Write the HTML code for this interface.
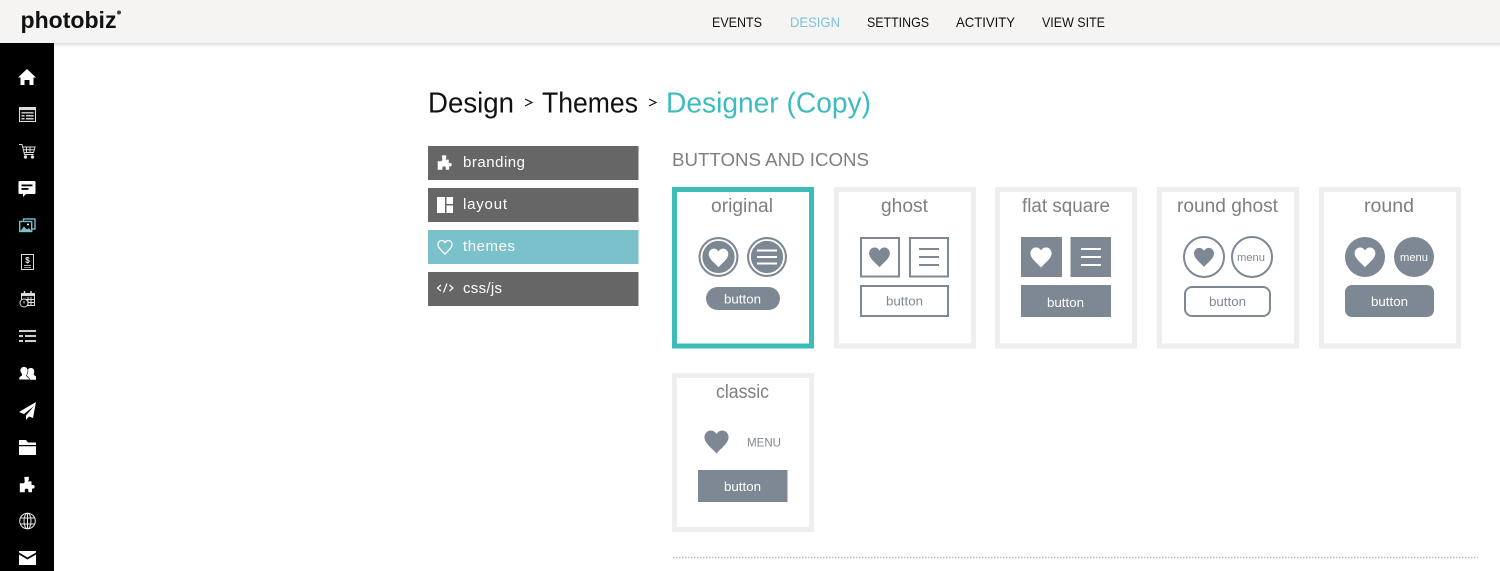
<!DOCTYPE html>
<html><head><meta charset="utf-8"><title>Themes</title>
<style>
html,body{margin:0;padding:0;background:#fff;width:1500px;height:571px;overflow:hidden}
svg{display:block;position:absolute;left:0;top:0}
text{font-family:"Liberation Sans",sans-serif}
.nav{font-size:14px;fill:#111}
.l{font-size:19px;fill:#7f7f7f;text-anchor:start}
.b{font-size:13px}
.m{font-size:15px;fill:#fff}
.t{font-size:29px;fill:#111}
</style></head><body>
<svg width="1500" height="571" viewBox="0 0 1500 571" xmlns="http://www.w3.org/2000/svg">
<defs>
<linearGradient id="sh" x1="0" y1="0" x2="0" y2="1"><stop offset="0" stop-color="#ddd"/><stop offset="1" stop-color="#fff"/></linearGradient>
<path id="h" d="M0 11.500C-3 7.500-11.500 2-11.500-4C-11.500-8-8.500-10.500-5.500-10.500C-3-10.500-1-9 0-7C1-9 3-10.500 5.500-10.500C8.500-10.500 11.500-8 11.500-4C11.500 2 3 7.500 0 11.500Z"/>
<path id="pz" d="M-3-9h5v3.500l-1 1.500h4v4h1.500a2 2 0 1 1 0 4H5.500V8H1.500V6a2 2 0 0 0-4 0v2H-8V-2H-3.500l1-1.500Z"/>
</defs>
<rect width="1500" height="571" fill="#fff"/>
<rect width="1500" height="43" fill="#f5f4f2"/>
<rect y="43" width="1500" height="4" fill="url(#sh)"/>
<rect y="43" width="54" height="528" fill="#000"/>

<text x="20.500" y="28" font-size="23.500" font-weight="bold" fill="#111" textLength="96" lengthAdjust="spacingAndGlyphs">photobiz</text>
<circle cx="119" cy="12.500" r="2" fill="#444"/>

<text class="nav" x="712" y="27" textLength="50" lengthAdjust="spacingAndGlyphs">EVENTS</text>
<text class="nav" x="790" y="27" textLength="50" lengthAdjust="spacingAndGlyphs" style="fill:#7bc4d6">DESIGN</text>
<text class="nav" x="867" y="27" textLength="62" lengthAdjust="spacingAndGlyphs">SETTINGS</text>
<text class="nav" x="956" y="27" textLength="59" lengthAdjust="spacingAndGlyphs">ACTIVITY</text>
<text class="nav" x="1042" y="27" textLength="63" lengthAdjust="spacingAndGlyphs">VIEW SITE</text>

<!-- sidebar icons -->
<path d="M27 69L36 77.500H33.500V85H29.500V80H24.500V85H20.500V77.500H18Z" fill="#fff"/>
<g><rect x="19.500" y="107.500" width="16" height="14" fill="#111" stroke="#ddd"/><rect x="19" y="107" width="17" height="3" fill="#ddd"/><rect x="21.500" y="112" width="12" height="1.500" fill="#bbb"/><rect x="21.500" y="115" width="3" height="1.500" fill="#ccc"/><rect x="26" y="115" width="7.500" height="1.500" fill="#ccc"/><rect x="21.500" y="118" width="3" height="1.500" fill="#ccc"/><rect x="26" y="118" width="7.500" height="1.500" fill="#ccc"/></g>
<g fill="none" stroke="#ddd"><path d="M19 144.500h3l2.500 10h9"/><path d="M23 147h12l-1.500 5.500H24.500M26.500 147v5.500M30 147v5.500M23.500 149.700h11"/><circle cx="25.500" cy="157" r="1.200" fill="#ddd"/><circle cx="32.500" cy="157" r="1.200" fill="#ddd"/></g>
<path d="M19.500 181h15a1 1 0 0 1 1 1v11a1 1 0 0 1-1 1H26l-3 3v-3h-3.500a1 1 0 0 1-1-1v-11a1 1 0 0 1 1-1Z" fill="#fff"/><rect x="21.500" y="184.500" width="11" height="1.800" fill="#000"/><rect x="21.500" y="188" width="7" height="1.800" fill="#000"/>
<g fill="none" stroke="#7bbccb" stroke-width="1.400"><rect x="23.500" y="219" width="11.500" height="10"/><rect x="19.700" y="221.500" width="12" height="10" fill="#000"/></g><path d="M19.500 232l4.500-5.500 3 3 2-1.500 3 4Z" fill="#7bc1cc"/><circle cx="28" cy="224.500" r="1" fill="#fff"/>
<g><rect x="21.500" y="254.500" width="12" height="15" fill="none" stroke="#ddd"/><text x="27.500" y="263" font-size="8" font-weight="bold" fill="#eee" text-anchor="middle">$</text><rect x="24" y="265" width="7" height="1" fill="#aaa"/><rect x="24" y="267" width="7" height="1" fill="#888"/></g>
<g fill="none" stroke="#ddd"><rect x="21.500" y="293.500" width="13" height="12" fill="#111"/><rect x="21.500" y="293.500" width="13" height="2.500" fill="#ddd" stroke="none"/><path d="M24.500 291v3M31 291v3" stroke-width="1.500"/><path d="M28 297v8M31 297v8M25 299.500h10M25 302.500h10"/><circle cx="24" cy="303" r="4" fill="#000"/><path d="M24 301v2.500"/></g>
<g fill="#cfd3d6"><rect x="19" y="330" width="17" height="2"/><rect x="19" y="335" width="4" height="2"/><rect x="25" y="335" width="11" height="2"/><rect x="19" y="340" width="4" height="2"/><rect x="25" y="340" width="11" height="2"/></g>
<path d="M31 368a3 3.500 0 0 1 3 5c-.5 1.200-.5 2 1 2.700l1 .8V379.800H29c0-2-1-3.500-2.500-4.500 1-1 1.500-2.500 1-4.500.5-1.800 1.500-2.800 3.500-2.800Z" fill="#fff"/><path d="M24 366.500a4 4.500 0 0 1 4 4.500c0 2-1 3.500-1.500 4.500 0 1 1 1.300 2 2 .8.600 1 1.300 1 2.300H19v-2c0-.8 1-1.500 2.500-2.300.5-1 .2-1.500-.5-2.500a6 6 0 0 1-1-2.500 4 4.500 0 0 1 4-4Z" fill="#fff" stroke="#000" stroke-width=".6"/>
<path d="M36 402L19 412l5 2 10-8-8 9.500V420l3-3.500 4 1.500Z" fill="#fff"/>
<path d="M19 440h7l2 2.500h8V445H19ZM19 446.300h17V455H19Z" fill="#fff"/>
<use href="#pz" transform="translate(27 485) scale(.9)" fill="#fff"/>
<g fill="none" stroke="#e8e8e8" stroke-width="1"><circle cx="27.500" cy="521" r="7.800"/><ellipse cx="27.500" cy="521" rx="3.500" ry="7.800"/><path d="M27.500 513v16M20 518h15M20 524h15"/></g>
<path d="M19 551h17v1.500l-8.500 5-8.500-5ZM19 554.500l8.500 5 8.500-5V565H19Z" fill="#fff"/>

<!-- title -->
<text class="t" x="428" y="112.500" textLength="86" lengthAdjust="spacingAndGlyphs">Design</text>
<path d="M525 99l7 3.500-7 3.500" fill="none" stroke="#111" stroke-width="1.200"/>
<text class="t" x="542" y="112.500" textLength="96" lengthAdjust="spacingAndGlyphs">Themes</text>
<path d="M649 99l7 3.500-7 3.500" fill="none" stroke="#111" stroke-width="1.200"/>
<text class="t" x="666" y="112.500" textLength="205" lengthAdjust="spacingAndGlyphs" style="fill:#3dbcc0">Designer (Copy)</text>

<!-- side menu -->
<rect x="428" y="146" width="210.500" height="34" fill="#666"/>
<rect x="428" y="188" width="210.500" height="34" fill="#666"/>
<rect x="428" y="230" width="210.500" height="34" fill="#7bc1cc"/>
<rect x="428" y="272" width="210.500" height="34" fill="#666"/>
<use href="#pz" transform="translate(444.500 163) scale(.85)" fill="#fff"/>
<g fill="#fff"><rect x="437" y="197" width="8" height="16"/><rect x="446.500" y="197" width="6.500" height="7"/><rect x="446.500" y="205.500" width="6.500" height="7.500"/></g>
<use href="#h" transform="translate(445 247) scale(.62)" fill="none" stroke="#fff" stroke-width="2"/>
<g fill="none" stroke="#fff" stroke-width="1.200"><path d="M441 285l-3.500 3 3.500 3M449.500 285l3.500 3-3.500 3M447 283.500l-3.500 9"/></g>
<text class="m" x="463" y="167" textLength="62" lengthAdjust="spacing">branding</text>
<text class="m" x="463" y="209" textLength="44" lengthAdjust="spacing">layout</text>
<text class="m" x="463" y="251" textLength="52" lengthAdjust="spacing">themes</text>
<text class="m" x="463" y="293" textLength="39" lengthAdjust="spacing">css/js</text>

<text x="672" y="166" font-size="18" fill="#7f7f7f" textLength="197" lengthAdjust="spacingAndGlyphs">BUTTONS AND ICONS</text>

<!-- cards -->
<g fill="none" stroke="#eee" stroke-width="5">
<rect x="836.500" y="189.500" width="137" height="156.500"/>
<rect x="997.500" y="189.500" width="137" height="156.500"/>
<rect x="1159.500" y="189.500" width="137" height="156.500"/>
<rect x="1321.500" y="189.500" width="137" height="156.500"/>
<rect x="674.500" y="375.500" width="137" height="154"/>
</g>
<rect x="674.500" y="189.500" width="137" height="156.500" fill="none" stroke="#3bbcb8" stroke-width="5"/>

<text class="l" x="711" y="212" textLength="62" lengthAdjust="spacingAndGlyphs">original</text>
<text class="l" x="881" y="212" textLength="47" lengthAdjust="spacingAndGlyphs">ghost</text>
<text class="l" x="1022" y="212" textLength="88" lengthAdjust="spacingAndGlyphs">flat square</text>
<text class="l" x="1177" y="212" textLength="101" lengthAdjust="spacingAndGlyphs">round ghost</text>
<text class="l" x="1364" y="212" textLength="50" lengthAdjust="spacingAndGlyphs">round</text>
<text class="l" x="716" y="398" textLength="53" lengthAdjust="spacingAndGlyphs">classic</text>

<!-- original -->
<g fill="#7d8894">
<circle cx="718.500" cy="257" r="20"/><circle cx="767" cy="257" r="20"/>
<circle cx="718.500" cy="257" r="17" fill="none" stroke="#fff" stroke-width="1.800"/><circle cx="767" cy="257" r="17" fill="none" stroke="#fff" stroke-width="1.800"/>
<use href="#h" transform="translate(718.500 257.500) scale(.85)" fill="#fff"/>
<rect x="757" y="249.500" width="20" height="2" fill="#fff"/><rect x="757" y="256" width="20" height="2" fill="#fff"/><rect x="757" y="262.500" width="20" height="2" fill="#fff"/>
<rect x="706" y="287" width="74" height="23" rx="11.500"/>
</g>
<text class="b" x="724" y="303.500" textLength="37" lengthAdjust="spacingAndGlyphs" fill="#fff">button</text>

<!-- ghost -->
<g fill="none" stroke="#7d8894" stroke-width="2">
<rect x="861" y="238" width="38" height="38.500"/><rect x="910" y="238" width="38" height="38.500"/>
<rect x="861" y="286" width="87" height="30"/>
<path d="M919 249h20M919 257h20M919 265h20"/>
</g>
<use href="#h" transform="translate(879.500 257) scale(.9)" fill="#7d8894"/>
<text class="b" x="886" y="305.500" textLength="37" lengthAdjust="spacingAndGlyphs" fill="#7d8894">button</text>

<!-- flat square -->
<g fill="#7d8894">
<rect x="1021" y="237" width="41" height="40"/><rect x="1070.500" y="237" width="40.500" height="40"/>
<rect x="1021" y="285" width="90" height="32"/>
</g>
<use href="#h" transform="translate(1041 257) scale(.92)" fill="#fff"/>
<g fill="#fff"><rect x="1081" y="248" width="20" height="2"/><rect x="1081" y="256" width="20" height="2"/><rect x="1081" y="264" width="20" height="2"/></g>
<text class="b" x="1047" y="307" textLength="37" lengthAdjust="spacingAndGlyphs" fill="#fff">button</text>

<!-- round ghost -->
<g fill="none" stroke="#7d8894" stroke-width="2">
<circle cx="1204" cy="257" r="20"/><circle cx="1252" cy="257" r="20"/>
<rect x="1185" y="287" width="85" height="29" rx="7"/>
</g>
<use href="#h" transform="translate(1204 257) scale(.87)" fill="#7d8894"/>
<text x="1237" y="261" font-size="11" textLength="28" lengthAdjust="spacingAndGlyphs" fill="#7d8894">menu</text>
<text class="b" x="1209" y="306" textLength="37" lengthAdjust="spacingAndGlyphs" fill="#7d8894">button</text>

<!-- round -->
<g fill="#7d8894">
<circle cx="1365" cy="257" r="20"/><circle cx="1414" cy="257" r="20"/>
<rect x="1345" y="285" width="89" height="32" rx="7"/>
</g>
<use href="#h" transform="translate(1365 257) scale(.9)" fill="#fff"/>
<text x="1400" y="261" font-size="11" textLength="28" lengthAdjust="spacingAndGlyphs" fill="#fff">menu</text>
<text class="b" x="1371" y="306" textLength="37" lengthAdjust="spacingAndGlyphs" fill="#fff">button</text>

<!-- classic -->
<use href="#h" transform="translate(716.500 441.500) scale(1.050)" fill="#7d8894"/>
<text x="747" y="446.500" font-size="12" textLength="34" lengthAdjust="spacingAndGlyphs" fill="#7d8894">MENU</text>
<rect x="698" y="470" width="89.500" height="32" fill="#7d8894"/>
<text class="b" x="724" y="491" textLength="37" lengthAdjust="spacingAndGlyphs" fill="#fff">button</text>

<line x1="673" y1="557.500" x2="1478" y2="557.500" stroke="#bbb" stroke-width="1.500" stroke-dasharray="1.500 1.500"/>
</svg>
</body></html>
